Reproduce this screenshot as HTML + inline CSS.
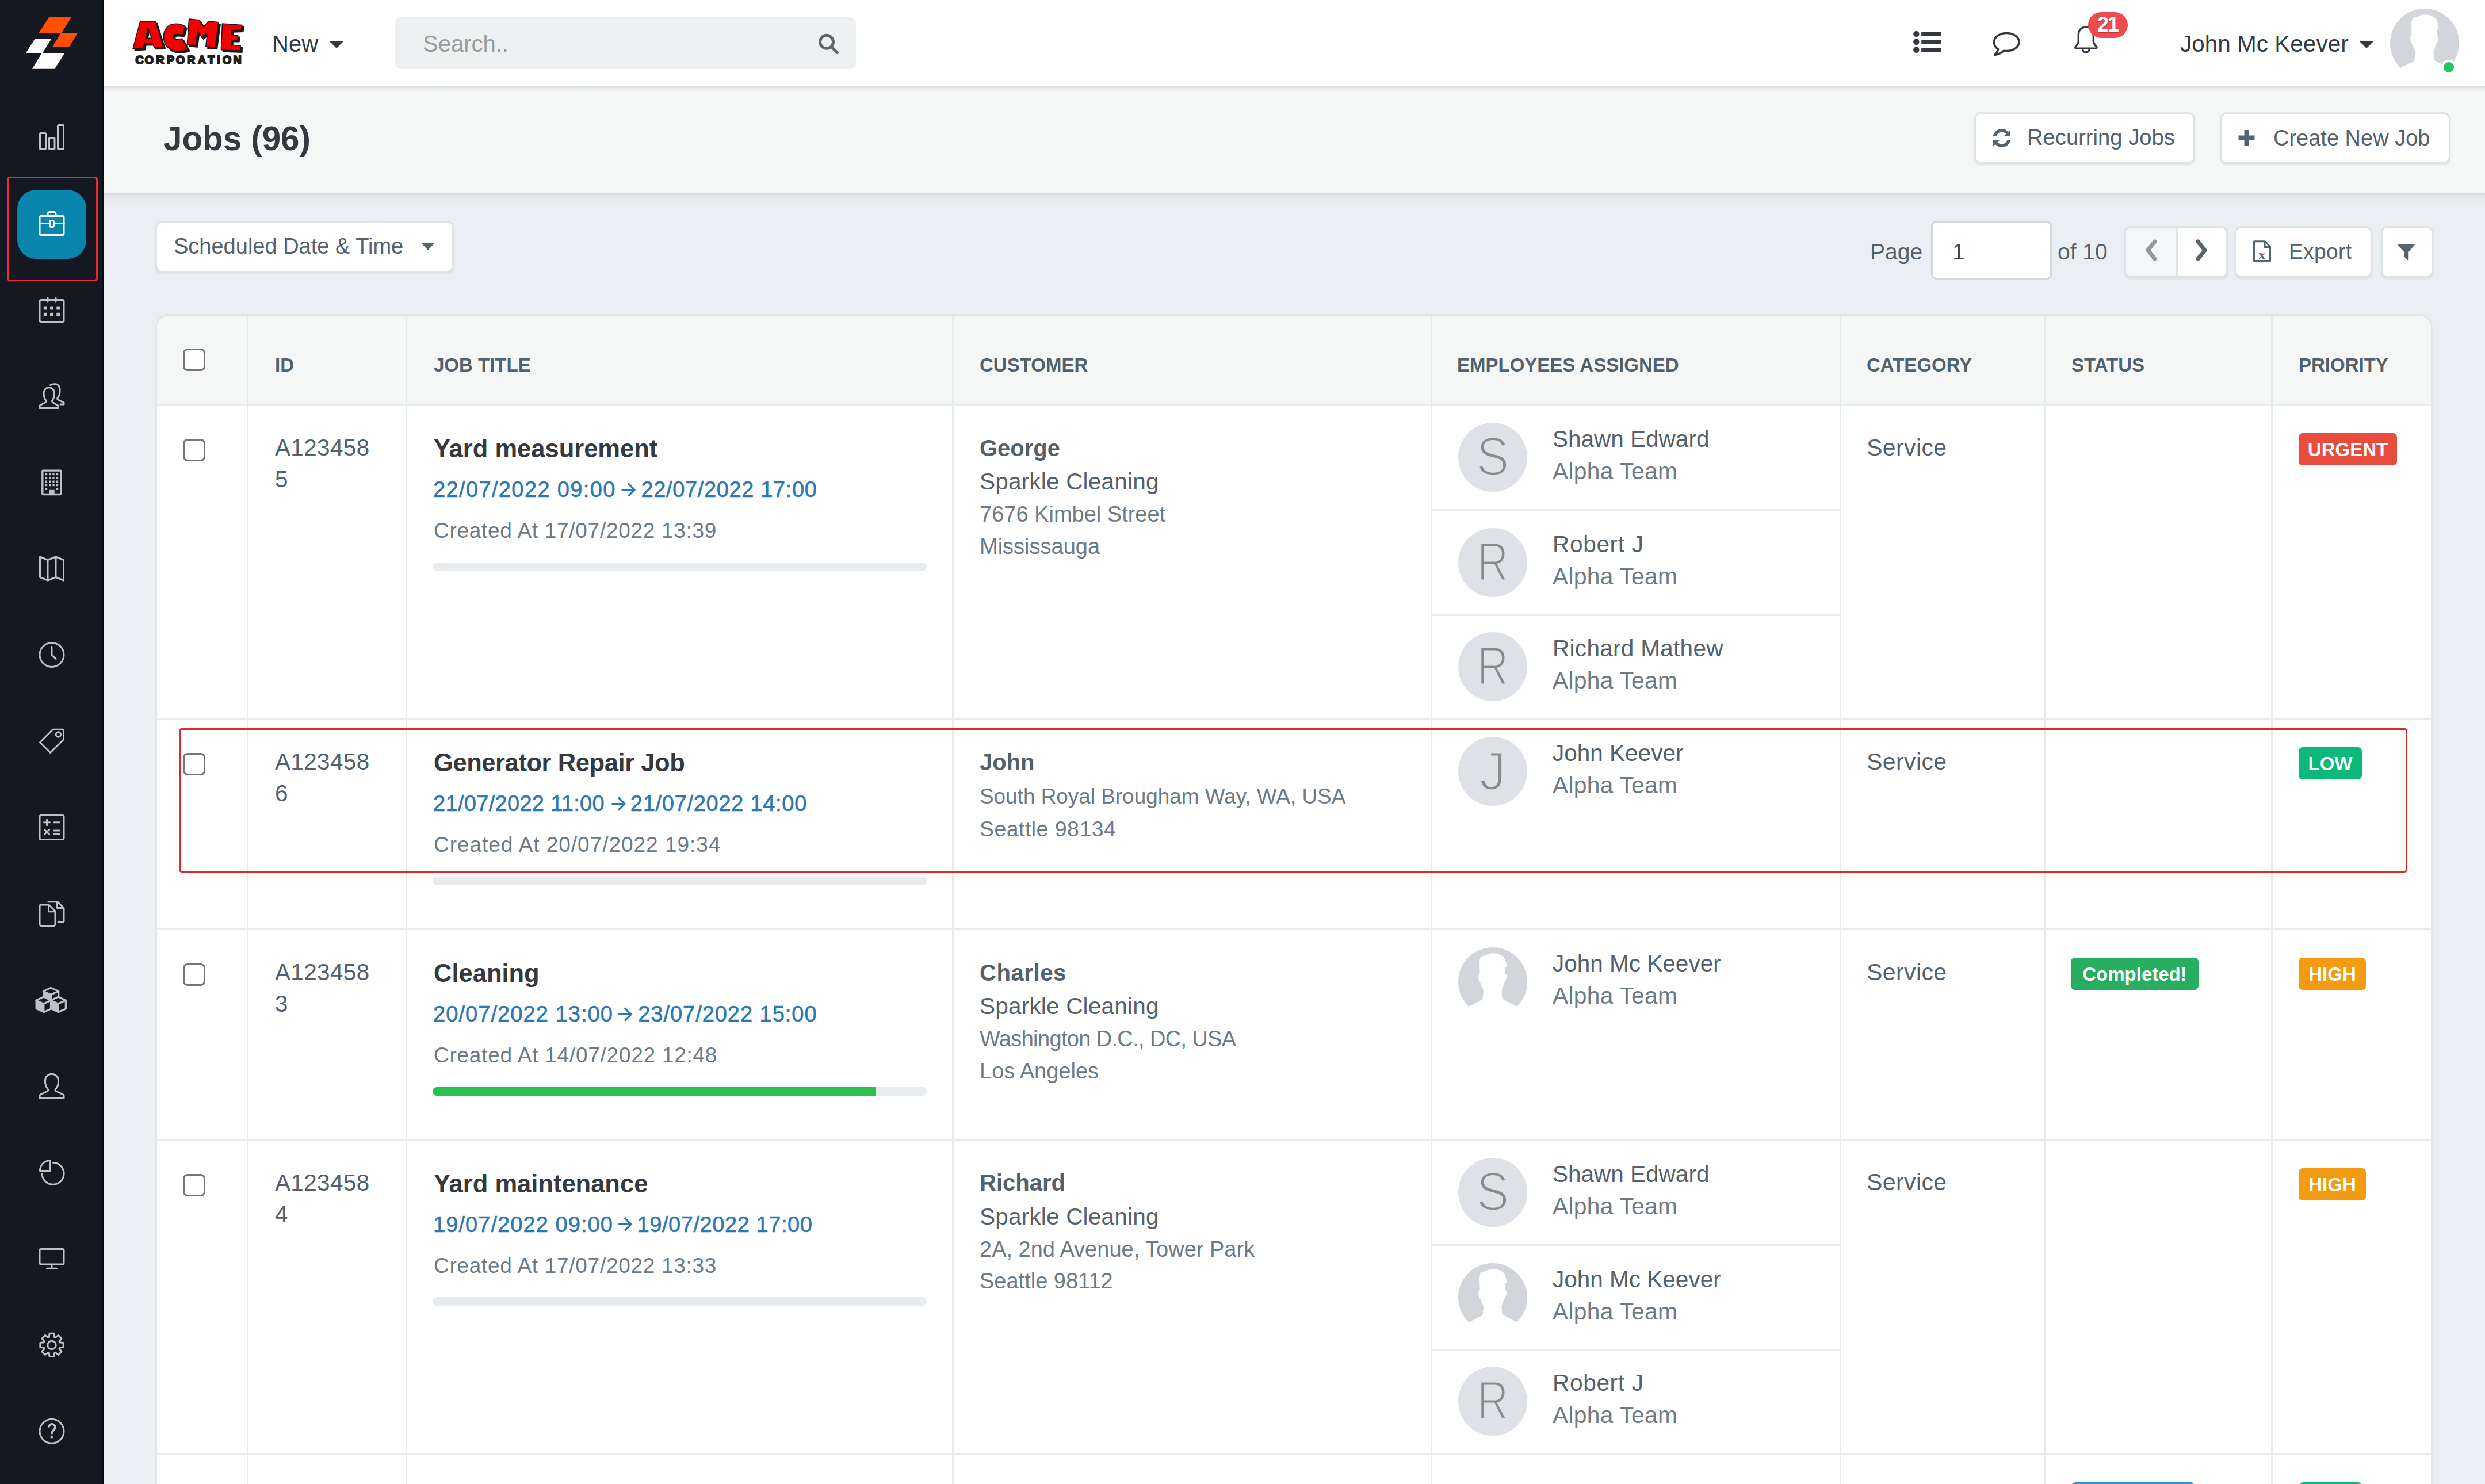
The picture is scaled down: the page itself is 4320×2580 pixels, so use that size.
<!DOCTYPE html>
<html><head><meta charset="utf-8"><title>Jobs</title>
<style>
html,body{margin:0;padding:0;}
body{width:4320px;height:2580px;overflow:hidden;position:relative;background:#ebeef2;font-family:"Liberation Sans",sans-serif;}
.a{position:absolute;display:block;}
.t{position:absolute;white-space:nowrap;line-height:1;}
</style></head><body>

<div class="a" style="left:180px;top:0px;width:4140px;height:150px;background:#ffffff"></div>
<div class="a" style="left:180px;top:150px;width:4140px;height:3px;background:#dcdfdf"></div>
<div class="a" style="left:180px;top:153px;width:4140px;height:183px;background:#f5f7f7"></div>
<div class="a" style="left:180px;top:153px;width:4140px;height:8px;background:linear-gradient(#e9ecec,#f5f7f7)"></div>
<div class="a" style="left:180px;top:336px;width:4140px;height:3px;background:#d8dde0"></div>
<div class="a" style="left:180px;top:339px;width:4140px;height:14px;background:linear-gradient(#e1e5e8,#ebeef2)"></div>
<div class="a" style="left:0px;top:0px;width:180px;height:2580px;background:#141823"></div>
<div class="a" style="left:178px;top:0px;width:2px;height:2580px;background:#060a14"></div>
<svg class="a" style="left:0px;top:0px;" width="180" height="150" viewBox="0 0 180 150"><polygon fill="#fe5000" points="85,30 124,30 107,57.6 67.4,57.6"/><polygon fill="#fe5000" points="106,57.4 135,57.4 119.7,82.1 90.8,82.1"/><polygon fill="#ffffff" points="60.3,67.9 89,67.9 74,92 45,92"/><polygon fill="#ffffff" points="72.8,92 112.6,92 95.1,119.8 55.9,119.8"/></svg>
<div class="a" style="left:30px;top:330px;width:120px;height:120px;background:#0a86ae;border-radius:33px"></div>
<div class="a" style="left:12px;top:307px;width:152px;height:176px;border:3px solid #ee2a2e;border-radius:5px"></div>
<svg class="a" style="left:50px;top:200px;" width="80" height="80" viewBox="0 0 80 80"><rect x="19.5" y="31.5" width="10" height="28" rx="1.5" fill="none" stroke="#bcc0c8" stroke-width="3" stroke-linecap="round" stroke-linejoin="round"/><rect x="35.5" y="39.5" width="9.5" height="20" rx="1.5" fill="none" stroke="#bcc0c8" stroke-width="3" stroke-linecap="round" stroke-linejoin="round"/><rect x="50.5" y="17.5" width="10" height="42" rx="1.5" fill="none" stroke="#bcc0c8" stroke-width="3" stroke-linecap="round" stroke-linejoin="round"/></svg>
<svg class="a" style="left:50px;top:350px;" width="80" height="80" viewBox="0 0 80 80"><rect x="19" y="25.5" width="42" height="33" rx="2.5" fill="none" stroke="#ffffff" stroke-width="3" stroke-linecap="round" stroke-linejoin="round"/><path d="M33 25.5 V22 a3.5 3.5 0 0 1 3.5 -3.5 h7 a3.5 3.5 0 0 1 3.5 3.5 V25.5" fill="none" stroke="#ffffff" stroke-width="3" stroke-linecap="round" stroke-linejoin="round"/><path d="M19 38.5 H36 M44 38.5 H61" fill="none" stroke="#ffffff" stroke-width="3" stroke-linecap="round" stroke-linejoin="round"/><rect x="36.5" y="33.5" width="7" height="11" rx="2.5" fill="none" stroke="#ffffff" stroke-width="3" stroke-linecap="round" stroke-linejoin="round"/></svg>
<svg class="a" style="left:50px;top:500px;" width="80" height="80" viewBox="0 0 80 80"><rect x="19" y="21.5" width="42" height="38" rx="2.5" fill="none" stroke="#bcc0c8" stroke-width="3" stroke-linecap="round" stroke-linejoin="round"/><path d="M33 17.5 V24 M47 17.5 V24" fill="none" stroke="#bcc0c8" stroke-width="3" stroke-linecap="round" stroke-linejoin="round"/><g fill="#bcc0c8"><rect x="25.8" y="32.6" width="6" height="6" rx="1.2"/><rect x="37" y="32.6" width="6" height="6" rx="1.2"/><rect x="48.2" y="32.6" width="6" height="6" rx="1.2"/><rect x="25.8" y="43.8" width="6" height="6" rx="1.2"/><rect x="37" y="43.8" width="6" height="6" rx="1.2"/><rect x="48.2" y="43.8" width="6" height="6" rx="1.2"/></g></svg>
<svg class="a" style="left:50px;top:650px;" width="80" height="80" viewBox="0 0 80 80"><path d="M19 59.5 H51 V55 L41.5 49.5 Q39.5 47.5 41.5 45 Q44.5 41 44.5 34 V33 A9.2 9.2 0 0 0 26.1 33 V34 Q26.1 41 29.1 45 Q31.1 47.5 29.1 49.5 L19 55 Z" fill="none" stroke="#bcc0c8" stroke-width="3" stroke-linecap="round" stroke-linejoin="round"/><path d="M37.5 19.5 Q41 17.5 44.5 17.5 A9 9 0 0 1 54 26.5 V31 Q54 37 50.5 41 Q48.5 43.5 51 45 L61 50 V53 H55" fill="none" stroke="#bcc0c8" stroke-width="3" stroke-linecap="round" stroke-linejoin="round"/></svg>
<svg class="a" style="left:50px;top:800px;" width="80" height="80" viewBox="0 0 80 80"><rect x="23.8" y="18.1" width="32.2" height="41.4" rx="1" fill="none" stroke="#bcc0c8" stroke-width="3.4"/><g fill="#bcc0c8"><rect x="28.8" y="22.8" width="3.4" height="3.4" rx="0.6"/><rect x="35.0" y="22.8" width="3.4" height="3.4" rx="0.6"/><rect x="41.3" y="22.8" width="3.4" height="3.4" rx="0.6"/><rect x="47.8" y="22.8" width="3.4" height="3.4" rx="0.6"/><rect x="28.8" y="29.0" width="3.4" height="3.4" rx="0.6"/><rect x="35.0" y="29.0" width="3.4" height="3.4" rx="0.6"/><rect x="41.3" y="29.0" width="3.4" height="3.4" rx="0.6"/><rect x="47.8" y="29.0" width="3.4" height="3.4" rx="0.6"/><rect x="28.8" y="35.5" width="3.4" height="3.4" rx="0.6"/><rect x="35.0" y="35.5" width="3.4" height="3.4" rx="0.6"/><rect x="41.3" y="35.5" width="3.4" height="3.4" rx="0.6"/><rect x="47.8" y="35.5" width="3.4" height="3.4" rx="0.6"/><rect x="28.8" y="41.9" width="3.4" height="3.4" rx="0.6"/><rect x="35.0" y="41.9" width="3.4" height="3.4" rx="0.6"/><rect x="41.3" y="41.9" width="3.4" height="3.4" rx="0.6"/><rect x="47.8" y="41.9" width="3.4" height="3.4" rx="0.6"/><rect x="28.8" y="48.6" width="3.4" height="3.4" rx="0.6"/><rect x="47.8" y="48.6" width="3.4" height="3.4" rx="0.6"/><rect x="35" y="51.8" width="9.7" height="8"/></g></svg>
<svg class="a" style="left:50px;top:950px;" width="80" height="80" viewBox="0 0 80 80"><path d="M19.5 18 L33 23.5 L47 18 L60.5 23.5 V59 L47 53.5 L33 59 L19.5 53.5 Z M33 23.5 V59 M47 18 V53.5" fill="none" stroke="#bcc0c8" stroke-width="3" stroke-linecap="round" stroke-linejoin="round"/></svg>
<svg class="a" style="left:50px;top:1100px;" width="80" height="80" viewBox="0 0 80 80"><circle cx="40" cy="38.4" r="21" fill="none" stroke="#bcc0c8" stroke-width="3" stroke-linecap="round" stroke-linejoin="round"/><path d="M40 24.5 V38.5 L47.2 45.5" fill="none" stroke="#bcc0c8" stroke-width="3" stroke-linecap="round" stroke-linejoin="round"/></svg>
<svg class="a" style="left:50px;top:1250px;" width="80" height="80" viewBox="0 0 80 80"><path d="M19.5 40.8 L42 18.2 H59 A1.5 1.5 0 0 1 60.5 19.7 V35.8 L37.5 58.5 Z" fill="none" stroke="#bcc0c8" stroke-width="3" stroke-linecap="round" stroke-linejoin="round"/><circle cx="51.3" cy="27" r="4.2" fill="none" stroke="#bcc0c8" stroke-width="3" stroke-linecap="round" stroke-linejoin="round"/></svg>
<svg class="a" style="left:50px;top:1400px;" width="80" height="80" viewBox="0 0 80 80"><rect x="19" y="17.5" width="42" height="42" rx="2.5" fill="none" stroke="#bcc0c8" stroke-width="3" stroke-linecap="round" stroke-linejoin="round"/><path d="M26.5 29.8 H36.5 M31.5 24.8 V34.8 M44 29.8 H53.5 M27.5 42.5 L35.5 50.5 M35.5 42.5 L27.5 50.5 M44 44 H53.5 M44 49.5 H53.5" fill="none" stroke="#bcc0c8" stroke-width="3" stroke-linecap="round" stroke-linejoin="round"/></svg>
<svg class="a" style="left:50px;top:1550px;" width="80" height="80" viewBox="0 0 80 80"><path d="M35 23 H21.5 A2.5 2.5 0 0 0 19 25.5 V57 A2.5 2.5 0 0 0 21.5 59.5 H43.5 A2.5 2.5 0 0 0 46 57 V34 L35 23 Z M34.5 23 V34.8 H46" fill="none" stroke="#bcc0c8" stroke-width="3" stroke-linecap="round" stroke-linejoin="round"/><path d="M34 17.7 H50 L61 28.5 V51 A2.5 2.5 0 0 1 58.5 53.5 H51 M49.5 17.7 V28.5 H61" fill="none" stroke="#bcc0c8" stroke-width="3" stroke-linecap="round" stroke-linejoin="round"/></svg>
<svg class="a" style="left:50px;top:1700px;" width="80" height="80" viewBox="0 0 80 80"><g transform="translate(38.5,15.8) scale(0.953,0.92) translate(-38.5,-15.7)"><path d="M24.7 24.0 L38.5 30.5 V46.5 L24.7 40.0 Z" fill="#bcc0c8" stroke="#bcc0c8" stroke-width="2.4" stroke-linejoin="round"/><path d="M38.5 17.5 L52.3 24.0 L38.5 30.5 L24.7 24.0 Z" fill="#141823" stroke="#bcc0c8" stroke-width="3.4" stroke-linejoin="round"/><path d="M38.5 30.5 L52.3 24.0 V40.0 L38.5 46.5 Z" fill="#141823" stroke="#bcc0c8" stroke-width="3.4" stroke-linejoin="round"/><path d="M11.399999999999999 41.0 L25.2 47.5 V63.5 L11.399999999999999 57.0 Z" fill="#bcc0c8" stroke="#bcc0c8" stroke-width="2.4" stroke-linejoin="round"/><path d="M25.2 34.5 L39.0 41.0 L25.2 47.5 L11.399999999999999 41.0 Z" fill="#141823" stroke="#bcc0c8" stroke-width="3.4" stroke-linejoin="round"/><path d="M25.2 47.5 L39.0 41.0 V57.0 L25.2 63.5 Z" fill="#141823" stroke="#bcc0c8" stroke-width="3.4" stroke-linejoin="round"/><path d="M38.0 41.0 L51.8 47.5 V63.5 L38.0 57.0 Z" fill="#bcc0c8" stroke="#bcc0c8" stroke-width="2.4" stroke-linejoin="round"/><path d="M51.8 34.5 L65.6 41.0 L51.8 47.5 L38.0 41.0 Z" fill="#141823" stroke="#bcc0c8" stroke-width="3.4" stroke-linejoin="round"/><path d="M51.8 47.5 L65.6 41.0 V57.0 L51.8 63.5 Z" fill="#141823" stroke="#bcc0c8" stroke-width="3.4" stroke-linejoin="round"/></g></svg>
<svg class="a" style="left:50px;top:1850px;" width="80" height="80" viewBox="0 0 80 80"><path d="M19 59.5 H61 V55 Q61 53.5 59.5 52.8 L47.5 47 Q45 45.5 46.8 43.5 Q51.5 38 51.5 30 V28.8 A11.5 11.5 0 0 0 28.5 28.8 V30 Q28.5 38 33.2 43.5 Q35 45.5 32.5 47 L20.5 52.8 Q19 53.5 19 55 Z" fill="none" stroke="#bcc0c8" stroke-width="3" stroke-linecap="round" stroke-linejoin="round"/></svg>
<svg class="a" style="left:50px;top:2000px;" width="80" height="80" viewBox="0 0 80 80"><path d="M37.3 17.5 V35.5 H19.5 A17.8 18 0 0 1 37.3 17.5 Z" fill="none" stroke="#bcc0c8" stroke-width="3" stroke-linecap="round" stroke-linejoin="round"/><path d="M42.5 21.3 A19 19 0 1 1 23.1 40.6" fill="none" stroke="#bcc0c8" stroke-width="3" stroke-linecap="round" stroke-linejoin="round"/></svg>
<svg class="a" style="left:50px;top:2150px;" width="80" height="80" viewBox="0 0 80 80"><rect x="19" y="21.5" width="42" height="26.5" rx="2.5" fill="none" stroke="#bcc0c8" stroke-width="3" stroke-linecap="round" stroke-linejoin="round"/><path d="M40 48 V55.3 M31.5 55.3 H48.5" fill="none" stroke="#bcc0c8" stroke-width="3" stroke-linecap="round" stroke-linejoin="round"/></svg>
<svg class="a" style="left:50px;top:2300px;" width="80" height="80" viewBox="0 0 80 80"><path d="M35.28 24.69 L36.09 18.28 L43.91 18.28 L44.72 24.69 L46.36 25.37 L51.46 21.40 L57.00 26.94 L53.03 32.04 L53.71 33.68 L60.12 34.49 L60.12 42.31 L53.71 43.12 L53.03 44.76 L57.00 49.86 L51.46 55.40 L46.36 51.43 L44.72 52.11 L43.91 58.52 L36.09 58.52 L35.28 52.11 L33.64 51.43 L28.54 55.40 L23.00 49.86 L26.97 44.76 L26.29 43.12 L19.88 42.31 L19.88 34.49 L26.29 33.68 L26.97 32.04 L23.00 26.94 L28.54 21.40 L33.64 25.37 Z" fill="none" stroke="#bcc0c8" stroke-width="3" stroke-linecap="round" stroke-linejoin="round"/><circle cx="40" cy="38.4" r="7.2" fill="none" stroke="#bcc0c8" stroke-width="3" stroke-linecap="round" stroke-linejoin="round"/></svg>
<svg class="a" style="left:50px;top:2450px;" width="80" height="80" viewBox="0 0 80 80"><circle cx="40" cy="38.3" r="21" fill="none" stroke="#bcc0c8" stroke-width="3" stroke-linecap="round" stroke-linejoin="round"/><path d="M34.8 31.5 A5.5 5.5 0 1 1 44.5 35 L41 39 Q39.8 40.4 39.8 42.5 V43.5" fill="none" stroke="#bcc0c8" stroke-width="3.6"/><rect x="37.8" y="46.5" width="4" height="3.8" fill="#bcc0c8"/></svg>
<svg class="a" style="left:0px;top:0px;" width="440" height="130" viewBox="0 0 440 130"><path fill-rule="evenodd" d="M234.3,87.6 246.8,41.1 273.2,40.4 287.6,85.2 270.9,85.4 269.2,78.8 253.9,78.8 252.2,86.6 Z M256.0,69.6 260.7,51.5 266.6,69.6 Z" fill="#1f1b1c" stroke="#1f1b1c" stroke-width="1.6" stroke-linejoin="round"/><path d="M321.9 45.5 C316 42.3 311 41.2 306 41.2 C292 41.2 284.4 51 284.4 64 C284.4 78 294 88.8 309 88.8 C316 88.8 322 87.5 326.4 85.5 L316.5 67.2 C313 68 309 68.1 306 68.1 C303 68.1 301.4 66 301.4 63.8 C301.4 61.5 303 59.6 305.5 59.6 C309 59.6 314 60 317.5 61 Z" transform="translate(3.2,3.2)" fill="#1f1b1c" stroke="#1f1b1c" stroke-width="1.6" stroke-linejoin="round"/><polygon points="331.9,36.2 349.6,37.9 356.7,49.9 365.7,40.0 383.1,42.1 377.4,85.5 360.9,84.3 363.8,59.3 353.9,68.3 346.8,56.5 343.5,82.0 328.6,80.8" fill="#1f1b1c" stroke="#1f1b1c" stroke-width="1.6" stroke-linejoin="round"/><polygon points="389.7,44.2 424.1,46.8 422.7,55.3 406.0,56.0 405.7,64.0 416.8,64.3 415.9,72.8 405.0,72.8 404.8,81.3 421.3,82.7 420.8,91.2 387.6,90.0" fill="#1f1b1c" stroke="#1f1b1c" stroke-width="1.6" stroke-linejoin="round"/><path fill-rule="evenodd" d="M231.1,84.4 243.6,37.9 270.0,37.2 284.4,82.0 267.7,82.2 266.0,75.6 250.7,75.6 249.0,83.4 Z M252.8,66.4 257.5,48.3 263.4,66.4 Z" fill="#f50000" stroke="#1f1b1c" stroke-width="1.6" stroke-linejoin="round"/><path d="M321.9 45.5 C316 42.3 311 41.2 306 41.2 C292 41.2 284.4 51 284.4 64 C284.4 78 294 88.8 309 88.8 C316 88.8 322 87.5 326.4 85.5 L316.5 67.2 C313 68 309 68.1 306 68.1 C303 68.1 301.4 66 301.4 63.8 C301.4 61.5 303 59.6 305.5 59.6 C309 59.6 314 60 317.5 61 Z" transform="translate(0,0)" fill="#f50000" stroke="#1f1b1c" stroke-width="1.6" stroke-linejoin="round"/><polygon points="328.7,33.0 346.4,34.7 353.5,46.7 362.5,36.8 379.9,38.9 374.2,82.3 357.7,81.1 360.6,56.1 350.7,65.1 343.6,53.3 340.3,78.8 325.4,77.6" fill="#f50000" stroke="#1f1b1c" stroke-width="1.6" stroke-linejoin="round"/><polygon points="386.5,41.0 420.9,43.6 419.5,52.1 402.8,52.8 402.5,60.8 413.6,61.1 412.7,69.6 401.8,69.6 401.6,78.1 418.1,79.5 417.6,88.0 384.4,86.8" fill="#f50000" stroke="#1f1b1c" stroke-width="1.6" stroke-linejoin="round"/><text x="242.5" y="111" text-anchor="middle" font-family="Liberation Sans" font-weight="700" font-size="19.5" fill="#231f20" stroke="#231f20" stroke-width="2.2" stroke-linejoin="round">C</text><text x="259.4" y="111" text-anchor="middle" font-family="Liberation Sans" font-weight="700" font-size="19.5" fill="#231f20" stroke="#231f20" stroke-width="2.2" stroke-linejoin="round">O</text><text x="278.3" y="111" text-anchor="middle" font-family="Liberation Sans" font-weight="700" font-size="19.5" fill="#231f20" stroke="#231f20" stroke-width="2.2" stroke-linejoin="round">R</text><text x="296.4" y="111" text-anchor="middle" font-family="Liberation Sans" font-weight="700" font-size="19.5" fill="#231f20" stroke="#231f20" stroke-width="2.2" stroke-linejoin="round">P</text><text x="313.7" y="111" text-anchor="middle" font-family="Liberation Sans" font-weight="700" font-size="19.5" fill="#231f20" stroke="#231f20" stroke-width="2.2" stroke-linejoin="round">O</text><text x="332.2" y="111" text-anchor="middle" font-family="Liberation Sans" font-weight="700" font-size="19.5" fill="#231f20" stroke="#231f20" stroke-width="2.2" stroke-linejoin="round">R</text><text x="351.1" y="111" text-anchor="middle" font-family="Liberation Sans" font-weight="700" font-size="19.5" fill="#231f20" stroke="#231f20" stroke-width="2.2" stroke-linejoin="round">A</text><text x="367.2" y="111" text-anchor="middle" font-family="Liberation Sans" font-weight="700" font-size="19.5" fill="#231f20" stroke="#231f20" stroke-width="2.2" stroke-linejoin="round">T</text><text x="380" y="111" text-anchor="middle" font-family="Liberation Sans" font-weight="700" font-size="19.5" fill="#231f20" stroke="#231f20" stroke-width="2.2" stroke-linejoin="round">I</text><text x="394.5" y="111" text-anchor="middle" font-family="Liberation Sans" font-weight="700" font-size="19.5" fill="#231f20" stroke="#231f20" stroke-width="2.2" stroke-linejoin="round">O</text><text x="412.6" y="111" text-anchor="middle" font-family="Liberation Sans" font-weight="700" font-size="19.5" fill="#231f20" stroke="#231f20" stroke-width="2.2" stroke-linejoin="round">N</text></svg>
<div class="t" style="left:473.0px;top:55.9px;font-size:40px;color:#343a40;font-weight:400;">New</div>
<svg class="a" style="left:573px;top:72px;" width="24" height="12" viewBox="0 0 24 12"><polygon points="0,0 24,0 12,12" fill="#343a40"/></svg>
<div class="a" style="left:687px;top:30px;width:801px;height:90px;background:#edf0f1;border-radius:9px"></div>
<div class="t" style="left:735.0px;top:56.1px;font-size:40px;color:#9b9b9b;font-weight:400;">Search..</div>
<svg class="a" style="left:1415px;top:52px;" width="48" height="48" viewBox="0 0 48 48"><circle cx="22" cy="20.8" r="11.5" fill="none" stroke="#5b6872" stroke-width="5"/><path d="M30.5 29.5 L40.5 39.5" stroke="#5b6872" stroke-width="5" stroke-linecap="round"/></svg>
<svg class="a" style="left:3320px;top:50px;" width="60" height="45" viewBox="0 0 60 45"><g fill="#343a40"><circle cx="11.3" cy="8.9" r="5.2"/><circle cx="11.3" cy="22.7" r="5.2"/><circle cx="11.3" cy="36.8" r="5.2"/><rect x="20.2" y="5.5" width="33.8" height="6.8" rx="0.8"/><rect x="20.2" y="19.3" width="33.8" height="6.8" rx="0.8"/><rect x="20.2" y="33.4" width="33.8" height="6.8" rx="0.8"/></g></svg>
<svg class="a" style="left:3455px;top:45px;" width="65" height="60" viewBox="0 0 65 60"><path d="M33.2 12.5 C45.5 12.5 55 19.5 55 28 C55 36.5 45.5 43.5 33.2 43.5 C31.5 43.5 30 43.4 28.6 43.2 C25 46.5 19.5 49.5 13 50.5 C15.8 47.5 17.8 44 18.6 40.5 C13.5 37.5 11.5 33 11.5 28 C11.5 19.5 21 12.5 33.2 12.5 Z" fill="none" stroke="#343a40" stroke-width="3.6" stroke-linejoin="round"/></svg>
<svg class="a" style="left:3600px;top:40px;" width="55" height="58" viewBox="0 0 55 58"><path d="M26.3 7 C17.8 7 13.3 13 13.3 21 V31.5 C13.3 35 11 38 8 41.5 C7 42.8 7.6 44.2 9.3 44.2 H43.3 C45 44.2 45.6 42.8 44.6 41.5 C41.6 38 39.3 35 39.3 31.5 V21 C39.3 13 34.8 7 26.3 7 Z" fill="none" stroke="#343a40" stroke-width="3.4" stroke-linejoin="round"/><path d="M20.3 45 A6 6 0 0 0 32.3 45" fill="none" stroke="#343a40" stroke-width="3.4"/></svg>
<div class="a" style="left:3630px;top:21px;width:69px;height:45px;background:#ef4b4f;border-radius:23px"></div>
<div class="t" style="left:3646.0px;top:25.0px;font-size:36px;color:#ffffff;font-weight:700;text-shadow:0 2px 0 rgba(120,0,0,0.35);letter-spacing:-2px">21</div>
<div class="t" style="left:3790.0px;top:55.7px;font-size:40.5px;color:#343a40;font-weight:400;">John Mc Keever</div>
<svg class="a" style="left:4102px;top:72px;" width="24" height="12" viewBox="0 0 24 12"><polygon points="0,0 24,0 12,12" fill="#343a40"/></svg>
<svg class="a" style="left:4155px;top:15px;" width="120" height="120" viewBox="0 0 120 120"><circle cx="60" cy="60" r="60" fill="#d2d6da"/><path fill="#ffffff" d="M18.5 102.7 L40.7 91.4 Q43 89 43 85.3 L44.4 74.9 L40.7 68.3 L39.2 62.2 L37.4 60.3 Q35 56 35 51.3 Q35 47.5 37.6 46.2 L37.2 31.5 Q37 22 37.8 20.2 Q39 16 41.6 15.5 L46.3 14.5 Q51 11 60.5 10.3 Q70 10.5 74.6 13.6 Q80 17 81.2 21.1 Q84 27 84.1 32.5 V34.3 L82.2 35.3 L81.7 46.6 L84.1 48.5 Q84.5 51 83.6 54.2 L81.2 60.8 L79.3 62.6 L78.4 67.4 L75.6 74 L76 84.3 Q76.5 89 78.4 90.5 L101.5 102.7 L120 120 H0 Z"/></svg>
<div class="a" style="left:4248px;top:108px;width:18px;height:18px;background:#22c55e;border-radius:50%;box-shadow:0 0 0 4.5px #ffffff"></div>
<div class="t" style="left:284.0px;top:212.3px;font-size:58.3px;color:#343a40;font-weight:700;">Jobs (96)</div>
<div class="a" style="left:3432px;top:195px;width:384px;height:90px;box-sizing:border-box;background:#ffffff;border:3px solid #dde4e6;border-radius:12px;box-shadow:0 2px 3px rgba(30,50,60,0.09)"></div>
<svg class="a" style="left:3460px;top:220px;" width="40" height="40" viewBox="0 0 40 40"><g fill="#56646d"><path d="M4.5 16.5 C6.5 9 13 4 20 4 C24.5 4 28.5 6 31.3 9 L35 5.2 V16.6 H23.6 L27.4 12.8 C25.5 10.8 22.9 9.5 20 9.5 C15.8 9.5 12 12.3 10.4 16.6 Z"/><path d="M35.5 23.4 C33.5 31 27 36 20 36 C15.5 36 11.5 34 8.7 31 L5 34.8 V23.4 H16.4 L12.6 27.2 C14.5 29.2 17.1 30.5 20 30.5 C24.2 30.5 28 27.7 29.6 23.4 Z"/></g></svg>
<div class="t" style="left:3524.0px;top:220.4px;font-size:38.2px;color:#52616b;font-weight:400;">Recurring Jobs</div>
<div class="a" style="left:3859px;top:195px;width:401px;height:90px;box-sizing:border-box;background:#ffffff;border:3px solid #dde4e6;border-radius:12px;box-shadow:0 2px 3px rgba(30,50,60,0.09)"></div>
<svg class="a" style="left:3888px;top:222px;" width="36" height="36" viewBox="0 0 36 36"><path d="M17.5 4 V31 M3.5 17.5 H31.5" stroke="#56646d" stroke-width="8"/></svg>
<div class="t" style="left:3952.0px;top:220.5px;font-size:38px;color:#52616b;font-weight:400;">Create New Job</div>
<div class="a" style="left:270px;top:384px;width:519px;height:90px;box-sizing:border-box;background:#ffffff;border:3px solid #dde4e6;border-radius:12px;box-shadow:0 2px 3px rgba(30,50,60,0.09)"></div>
<div class="t" style="left:302.0px;top:409.1px;font-size:38px;color:#52616b;font-weight:400;">Scheduled Date &amp; Time</div>
<svg class="a" style="left:732px;top:422px;" width="24" height="13" viewBox="0 0 24 13"><polygon points="0,0 24,0 12,13" fill="#56646d"/></svg>
<div class="t" style="left:3251.0px;top:417.5px;font-size:39px;color:#52616b;font-weight:400;">Page</div>
<div class="a" style="left:3357px;top:384px;width:210px;height:102px;box-sizing:border-box;background:#ffffff;border:3px solid #cfd9da;border-radius:9px"></div>
<div class="t" style="left:3394.0px;top:417.5px;font-size:39px;color:#454545;font-weight:400;">1</div>
<div class="t" style="left:3577.0px;top:417.5px;font-size:39px;color:#52616b;font-weight:400;">of 10</div>
<div class="a" style="left:3693px;top:393px;width:180px;height:90px;box-sizing:border-box;background:#ffffff;border:3px solid #dde4e6;border-radius:12px;box-shadow:0 2px 3px rgba(30,50,60,0.09);overflow:hidden"></div>
<div class="a" style="left:3696px;top:396px;width:88px;height:84px;background:#f4f6f8;border-radius:9px 0 0 9px"></div>
<div class="a" style="left:3783px;top:396px;width:3px;height:84px;background:#dde4e6"></div>
<svg class="a" style="left:3724px;top:414px;" width="32" height="42" viewBox="0 0 32 42"><path d="M22 6 L10 21 L22 36" fill="none" stroke="#8f999f" stroke-width="7" stroke-linecap="round" stroke-linejoin="round"/></svg>
<svg class="a" style="left:3811px;top:414px;" width="32" height="42" viewBox="0 0 32 42"><path d="M10 6 L22 21 L10 36" fill="none" stroke="#56636b" stroke-width="7" stroke-linecap="round" stroke-linejoin="round"/></svg>
<div class="a" style="left:3885px;top:393px;width:239px;height:90px;box-sizing:border-box;background:#ffffff;border:3px solid #dde4e6;border-radius:12px;box-shadow:0 2px 3px rgba(30,50,60,0.09)"></div>
<svg class="a" style="left:3915px;top:417px;" width="36" height="40" viewBox="0 0 36 40"><path d="M3.5 2.8 H22.5 L31.5 12 V36.5 H3.5 Z M22 3 V12.5 H31.5" fill="none" stroke="#56646d" stroke-width="3" stroke-linejoin="round"/><text x="17" y="33.5" text-anchor="middle" font-family="Liberation Serif" font-weight="700" font-size="26" fill="#56646d">x</text></svg>
<div class="t" style="left:3979.0px;top:418.5px;font-size:37px;color:#52616b;font-weight:400;letter-spacing:0.4px">Export</div>
<div class="a" style="left:4139px;top:393px;width:91px;height:90px;box-sizing:border-box;background:#ffffff;border:3px solid #dde4e6;border-radius:12px;box-shadow:0 2px 3px rgba(30,50,60,0.09)"></div>
<svg class="a" style="left:4166px;top:422px;" width="34" height="32" viewBox="0 0 34 32"><path d="M3.5 3.3 H30.5 L20 15.5 V29 L14.5 23.5 V15.5 Z" fill="#56646d" stroke="#56646d" stroke-width="2.5" stroke-linejoin="round"/></svg>
<div class="a" style="left:270px;top:546px;width:3959px;height:2074px;box-sizing:border-box;background:#ffffff;border:3px solid #e3e6e6;border-radius:24px 24px 0 0"></div>
<div class="a" style="left:273px;top:549px;width:3953px;height:153px;background:#f5f7f7;border-radius:21px 21px 0 0"></div>
<div class="a" style="left:273px;top:702px;width:3953px;height:3px;background:#e6ebeb"></div>
<div class="a" style="left:429px;top:549px;width:3px;height:2034px;background:#e6ebeb"></div>
<div class="a" style="left:704.5px;top:549px;width:3px;height:2034px;background:#e6ebeb"></div>
<div class="a" style="left:1655px;top:549px;width:3px;height:2034px;background:#e6ebeb"></div>
<div class="a" style="left:2486.5px;top:549px;width:3px;height:2034px;background:#e6ebeb"></div>
<div class="a" style="left:3197.5px;top:549px;width:3px;height:2034px;background:#e6ebeb"></div>
<div class="a" style="left:3552.5px;top:549px;width:3px;height:2034px;background:#e6ebeb"></div>
<div class="a" style="left:3948px;top:549px;width:3px;height:2034px;background:#e6ebeb"></div>
<div class="a" style="left:318px;top:606px;width:39px;height:39px;box-sizing:border-box;background:#ffffff;border:3px solid #767676;border-radius:8px"></div>
<div class="t" style="left:478.0px;top:618.1px;font-size:33px;color:#52616b;font-weight:700;">ID</div>
<div class="t" style="left:754.0px;top:618.1px;font-size:33px;color:#52616b;font-weight:700;">JOB TITLE</div>
<div class="t" style="left:1703.0px;top:618.1px;font-size:33px;color:#52616b;font-weight:700;">CUSTOMER</div>
<div class="t" style="left:2533.0px;top:618.1px;font-size:33px;color:#52616b;font-weight:700;">EMPLOYEES ASSIGNED</div>
<div class="t" style="left:3245.0px;top:618.1px;font-size:33px;color:#52616b;font-weight:700;">CATEGORY</div>
<div class="t" style="left:3601.0px;top:618.1px;font-size:33px;color:#52616b;font-weight:700;">STATUS</div>
<div class="t" style="left:3996.0px;top:618.1px;font-size:33px;color:#52616b;font-weight:700;">PRIORITY</div>
<div class="a" style="left:273px;top:1248px;width:3953px;height:3px;background:#e6ebeb"></div>
<div class="a" style="left:273px;top:1614px;width:3953px;height:3px;background:#e6ebeb"></div>
<div class="a" style="left:273px;top:1979.5px;width:3953px;height:3px;background:#e6ebeb"></div>
<div class="a" style="left:273px;top:2525.5px;width:3953px;height:3px;background:#e6ebeb"></div>
<div class="a" style="left:318px;top:763px;width:39px;height:39px;box-sizing:border-box;background:#ffffff;border:3px solid #767676;border-radius:8px"></div>
<div class="t" style="left:478.0px;top:758.3px;font-size:40.4px;color:#52616b;font-weight:400;letter-spacing:0.4px;">A123458</div>
<div class="t" style="left:478.0px;top:813.3px;font-size:40.4px;color:#52616b;font-weight:400;">5</div>
<div class="t" style="left:754.0px;top:759.2px;font-size:43.5px;color:#343a40;font-weight:700;">Yard measurement</div>
<div class="t" style="left:753.0px;top:832.3px;font-size:38px;color:#2b78b5;font-weight:400;letter-spacing:1.37px;-webkit-text-stroke:0.6px #2b78b5">22/07/2022 09:00</div>
<svg class="a" style="left:1078.7px;top:838.5px;" width="27" height="26" viewBox="0 0 27 26"><path d="M1.5 12.5 H24 M13 1.5 L24 12.5 L13 23.5" fill="none" stroke="#2b78b5" stroke-width="3.2"/></svg>
<div class="t" style="left:1114.4px;top:832.3px;font-size:38px;color:#2b78b5;font-weight:400;letter-spacing:0.64px;-webkit-text-stroke:0.6px #2b78b5">22/07/2022 17:00</div>
<div class="t" style="left:754.0px;top:904.2px;font-size:37px;color:#6c7a84;font-weight:400;letter-spacing:0.7px;">Created At 17/07/2022 13:39</div>
<div class="a" style="left:752px;top:977.5px;width:859px;height:15px;background:#e9ecef;border-radius:8px;overflow:hidden"></div>
<div class="t" style="left:1703.0px;top:758.6px;font-size:40px;color:#52616b;font-weight:700;">George</div>
<div class="t" style="left:1703.0px;top:817.2px;font-size:40.5px;color:#52616b;font-weight:400;letter-spacing:0.2px;">Sparkle Cleaning</div>
<div class="t" style="left:1703.0px;top:875.3px;font-size:38px;color:#6c7a84;font-weight:400;">7676 Kimbel Street</div>
<div class="t" style="left:1703.0px;top:930.8px;font-size:38px;color:#6c7a84;font-weight:400;">Mississauga</div>
<svg class="a" style="left:2535px;top:735px;" width="120" height="120" viewBox="0 0 120 120"><circle cx="60" cy="60" r="60" fill="#dee2e6"/><g transform="translate(60,0) scale(0.9,1)"><text x="0" y="91.5" text-anchor="middle" font-family="Liberation Sans" font-size="94.5" fill="#8a8a8a" stroke="#dee2e6" stroke-width="3.2">S</text></g></svg>
<div class="t" style="left:2699.0px;top:743.2px;font-size:40.5px;color:#52616b;font-weight:400;">Shawn Edward</div>
<div class="t" style="left:2699.0px;top:799.2px;font-size:40.7px;color:#6c7a84;font-weight:400;letter-spacing:0.3px;">Alpha Team</div>
<div class="a" style="left:2489.5px;top:885px;width:708px;height:3px;background:#e6ebeb"></div>
<svg class="a" style="left:2535px;top:918px;" width="120" height="120" viewBox="0 0 120 120"><circle cx="60" cy="60" r="60" fill="#dee2e6"/><g transform="translate(60,0) scale(0.8,1)"><text x="0" y="91.5" text-anchor="middle" font-family="Liberation Sans" font-size="94.5" fill="#8a8a8a" stroke="#dee2e6" stroke-width="3.2">R</text></g></svg>
<div class="t" style="left:2699.0px;top:926.2px;font-size:40.5px;color:#52616b;font-weight:400;letter-spacing:0.7px;">Robert J</div>
<div class="t" style="left:2699.0px;top:982.2px;font-size:40.7px;color:#6c7a84;font-weight:400;letter-spacing:0.3px;">Alpha Team</div>
<div class="a" style="left:2489.5px;top:1068px;width:708px;height:3px;background:#e6ebeb"></div>
<svg class="a" style="left:2535px;top:1098.5px;" width="120" height="120" viewBox="0 0 120 120"><circle cx="60" cy="60" r="60" fill="#dee2e6"/><g transform="translate(60,0) scale(0.8,1)"><text x="0" y="91.5" text-anchor="middle" font-family="Liberation Sans" font-size="94.5" fill="#8a8a8a" stroke="#dee2e6" stroke-width="3.2">R</text></g></svg>
<div class="t" style="left:2699.0px;top:1106.7px;font-size:40.5px;color:#52616b;font-weight:400;letter-spacing:0.3px;">Richard Mathew</div>
<div class="t" style="left:2699.0px;top:1162.7px;font-size:40.7px;color:#6c7a84;font-weight:400;letter-spacing:0.3px;">Alpha Team</div>
<div class="t" style="left:3245.0px;top:757.8px;font-size:41px;color:#52616b;font-weight:400;letter-spacing:0.4px;">Service</div>
<div class="a" style="left:3996px;top:753px;width:171px;height:56px;background:#e74c3c;border-radius:7px"></div>
<div class="t" style="left:3996px;top:753px;width:171px;height:56px;line-height:57px;text-align:center;font-size:33px;color:#fff;font-weight:700">URGENT</div>
<div class="a" style="left:318px;top:1309px;width:39px;height:39px;box-sizing:border-box;background:#ffffff;border:3px solid #767676;border-radius:8px"></div>
<div class="t" style="left:478.0px;top:1304.3px;font-size:40.4px;color:#52616b;font-weight:400;letter-spacing:0.4px;">A123458</div>
<div class="t" style="left:478.0px;top:1359.3px;font-size:40.4px;color:#52616b;font-weight:400;">6</div>
<div class="t" style="left:754.0px;top:1305.2px;font-size:43.5px;color:#343a40;font-weight:700;letter-spacing:-0.42px;">Generator Repair Job</div>
<div class="t" style="left:753.0px;top:1378.3px;font-size:38px;color:#2b78b5;font-weight:400;letter-spacing:0.31px;-webkit-text-stroke:0.6px #2b78b5">21/07/2022 11:00</div>
<svg class="a" style="left:1061.6px;top:1384.5px;" width="27" height="26" viewBox="0 0 27 26"><path d="M1.5 12.5 H24 M13 1.5 L24 12.5 L13 23.5" fill="none" stroke="#2b78b5" stroke-width="3.2"/></svg>
<div class="t" style="left:1095.8px;top:1378.3px;font-size:38px;color:#2b78b5;font-weight:400;letter-spacing:0.71px;-webkit-text-stroke:0.6px #2b78b5">21/07/2022 14:00</div>
<div class="t" style="left:754.0px;top:1450.2px;font-size:37px;color:#6c7a84;font-weight:400;letter-spacing:0.97px;">Created At 20/07/2022 19:34</div>
<div class="a" style="left:752px;top:1523.5px;width:859px;height:15px;background:#e9ecef;border-radius:8px;overflow:hidden"></div>
<div class="t" style="left:1703.0px;top:1304.6px;font-size:40px;color:#52616b;font-weight:700;">John</div>
<div class="t" style="left:1703.0px;top:1367.3px;font-size:36.9px;color:#6c7a84;font-weight:400;">South Royal Brougham Way, WA, USA</div>
<div class="t" style="left:1703.0px;top:1423.2px;font-size:37.5px;color:#6c7a84;font-weight:400;letter-spacing:0.45px;">Seattle 98134</div>
<svg class="a" style="left:2535px;top:1281px;" width="120" height="120" viewBox="0 0 120 120"><circle cx="60" cy="60" r="60" fill="#dee2e6"/><g transform="translate(60,0) scale(1.0,1)"><text x="0" y="91.5" text-anchor="middle" font-family="Liberation Sans" font-size="94.5" fill="#8a8a8a" stroke="#dee2e6" stroke-width="3.2">J</text></g></svg>
<div class="t" style="left:2699.0px;top:1289.2px;font-size:40.5px;color:#52616b;font-weight:400;">John Keever</div>
<div class="t" style="left:2699.0px;top:1345.2px;font-size:40.7px;color:#6c7a84;font-weight:400;letter-spacing:0.3px;">Alpha Team</div>
<div class="t" style="left:3245.0px;top:1303.8px;font-size:41px;color:#52616b;font-weight:400;letter-spacing:0.4px;">Service</div>
<div class="a" style="left:3996px;top:1299px;width:110px;height:56px;background:#0cb87a;border-radius:7px"></div>
<div class="t" style="left:3996px;top:1299px;width:110px;height:56px;line-height:57px;text-align:center;font-size:33px;color:#fff;font-weight:700">LOW</div>
<div class="a" style="left:318px;top:1675px;width:39px;height:39px;box-sizing:border-box;background:#ffffff;border:3px solid #767676;border-radius:8px"></div>
<div class="t" style="left:478.0px;top:1670.3px;font-size:40.4px;color:#52616b;font-weight:400;letter-spacing:0.4px;">A123458</div>
<div class="t" style="left:478.0px;top:1725.3px;font-size:40.4px;color:#52616b;font-weight:400;">3</div>
<div class="t" style="left:754.0px;top:1671.2px;font-size:43.5px;color:#343a40;font-weight:700;">Cleaning</div>
<div class="t" style="left:753.0px;top:1744.3px;font-size:38px;color:#2b78b5;font-weight:400;letter-spacing:1.07px;-webkit-text-stroke:0.6px #2b78b5">20/07/2022 13:00</div>
<svg class="a" style="left:1073.2px;top:1750.5px;" width="27" height="26" viewBox="0 0 27 26"><path d="M1.5 12.5 H24 M13 1.5 L24 12.5 L13 23.5" fill="none" stroke="#2b78b5" stroke-width="3.2"/></svg>
<div class="t" style="left:1109.2px;top:1744.3px;font-size:38px;color:#2b78b5;font-weight:400;letter-spacing:0.97px;-webkit-text-stroke:0.6px #2b78b5">23/07/2022 15:00</div>
<div class="t" style="left:754.0px;top:1816.2px;font-size:37px;color:#6c7a84;font-weight:400;letter-spacing:0.74px;">Created At 14/07/2022 12:48</div>
<div class="a" style="left:752px;top:1889.5px;width:859px;height:15px;background:#e9ecef;border-radius:8px;overflow:hidden"></div>
<div class="a" style="left:752px;top:1889.5px;width:771px;height:15px;background:#2bbf4f;border-radius:8px 0 0 8px"></div>
<div class="t" style="left:1703.0px;top:1670.6px;font-size:40px;color:#52616b;font-weight:700;letter-spacing:0.6px;">Charles</div>
<div class="t" style="left:1703.0px;top:1729.2px;font-size:40.5px;color:#52616b;font-weight:400;letter-spacing:0.2px;">Sparkle Cleaning</div>
<div class="t" style="left:1703.0px;top:1787.3px;font-size:38px;color:#6c7a84;font-weight:400;letter-spacing:-0.65px;">Washington D.C., DC, USA</div>
<div class="t" style="left:1703.0px;top:1842.8px;font-size:38px;color:#6c7a84;font-weight:400;">Los Angeles</div>
<svg class="a" style="left:2535px;top:1647px;" width="120" height="120" viewBox="0 0 120 120"><circle cx="60" cy="60" r="60" fill="#d2d6da"/><path fill="#ffffff" d="M18.5 102.7 L40.7 91.4 Q43 89 43 85.3 L44.4 74.9 L40.7 68.3 L39.2 62.2 L37.4 60.3 Q35 56 35 51.3 Q35 47.5 37.6 46.2 L37.2 31.5 Q37 22 37.8 20.2 Q39 16 41.6 15.5 L46.3 14.5 Q51 11 60.5 10.3 Q70 10.5 74.6 13.6 Q80 17 81.2 21.1 Q84 27 84.1 32.5 V34.3 L82.2 35.3 L81.7 46.6 L84.1 48.5 Q84.5 51 83.6 54.2 L81.2 60.8 L79.3 62.6 L78.4 67.4 L75.6 74 L76 84.3 Q76.5 89 78.4 90.5 L101.5 102.7 L120 120 H0 Z"/></svg>
<div class="t" style="left:2699.0px;top:1655.2px;font-size:40.5px;color:#52616b;font-weight:400;">John Mc Keever</div>
<div class="t" style="left:2699.0px;top:1711.2px;font-size:40.7px;color:#6c7a84;font-weight:400;letter-spacing:0.3px;">Alpha Team</div>
<div class="t" style="left:3245.0px;top:1669.8px;font-size:41px;color:#52616b;font-weight:400;letter-spacing:0.4px;">Service</div>
<div class="a" style="left:3600px;top:1665px;width:222px;height:56px;background:#27ae60;border-radius:7px"></div>
<div class="t" style="left:3600px;top:1665px;width:222px;height:56px;line-height:57px;text-align:center;font-size:33px;color:#fff;font-weight:700">Completed!</div>
<div class="a" style="left:3996px;top:1665px;width:117px;height:56px;background:#f39c12;border-radius:7px"></div>
<div class="t" style="left:3996px;top:1665px;width:117px;height:56px;line-height:57px;text-align:center;font-size:33px;color:#fff;font-weight:700">HIGH</div>
<div class="a" style="left:318px;top:2040.5px;width:39px;height:39px;box-sizing:border-box;background:#ffffff;border:3px solid #767676;border-radius:8px"></div>
<div class="t" style="left:478.0px;top:2035.8px;font-size:40.4px;color:#52616b;font-weight:400;letter-spacing:0.4px;">A123458</div>
<div class="t" style="left:478.0px;top:2090.8px;font-size:40.4px;color:#52616b;font-weight:400;">4</div>
<div class="t" style="left:754.0px;top:2036.7px;font-size:43.5px;color:#343a40;font-weight:700;">Yard maintenance</div>
<div class="t" style="left:753.0px;top:2109.8px;font-size:38px;color:#2b78b5;font-weight:400;letter-spacing:1.07px;-webkit-text-stroke:0.6px #2b78b5">19/07/2022 09:00</div>
<svg class="a" style="left:1073px;top:2116.0px;" width="27" height="26" viewBox="0 0 27 26"><path d="M1.5 12.5 H24 M13 1.5 L24 12.5 L13 23.5" fill="none" stroke="#2b78b5" stroke-width="3.2"/></svg>
<div class="t" style="left:1107.5px;top:2109.8px;font-size:38px;color:#2b78b5;font-weight:400;letter-spacing:0.57px;-webkit-text-stroke:0.6px #2b78b5">19/07/2022 17:00</div>
<div class="t" style="left:754.0px;top:2181.7px;font-size:37px;color:#6c7a84;font-weight:400;letter-spacing:0.7px;">Created At 17/07/2022 13:33</div>
<div class="a" style="left:752px;top:2255.0px;width:859px;height:15px;background:#e9ecef;border-radius:8px;overflow:hidden"></div>
<div class="t" style="left:1703.0px;top:2036.1px;font-size:40px;color:#52616b;font-weight:700;">Richard</div>
<div class="t" style="left:1703.0px;top:2094.7px;font-size:40.5px;color:#52616b;font-weight:400;letter-spacing:0.2px;">Sparkle Cleaning</div>
<div class="t" style="left:1703.0px;top:2152.8px;font-size:38px;color:#6c7a84;font-weight:400;">2A, 2nd Avenue, Tower Park</div>
<div class="t" style="left:1703.0px;top:2208.3px;font-size:38px;color:#6c7a84;font-weight:400;">Seattle 98112</div>
<svg class="a" style="left:2535px;top:2012.5px;" width="120" height="120" viewBox="0 0 120 120"><circle cx="60" cy="60" r="60" fill="#dee2e6"/><g transform="translate(60,0) scale(0.9,1)"><text x="0" y="91.5" text-anchor="middle" font-family="Liberation Sans" font-size="94.5" fill="#8a8a8a" stroke="#dee2e6" stroke-width="3.2">S</text></g></svg>
<div class="t" style="left:2699.0px;top:2020.7px;font-size:40.5px;color:#52616b;font-weight:400;">Shawn Edward</div>
<div class="t" style="left:2699.0px;top:2076.7px;font-size:40.7px;color:#6c7a84;font-weight:400;letter-spacing:0.3px;">Alpha Team</div>
<div class="a" style="left:2489.5px;top:2162.5px;width:708px;height:3px;background:#e6ebeb"></div>
<svg class="a" style="left:2535px;top:2195.5px;" width="120" height="120" viewBox="0 0 120 120"><circle cx="60" cy="60" r="60" fill="#d2d6da"/><path fill="#ffffff" d="M18.5 102.7 L40.7 91.4 Q43 89 43 85.3 L44.4 74.9 L40.7 68.3 L39.2 62.2 L37.4 60.3 Q35 56 35 51.3 Q35 47.5 37.6 46.2 L37.2 31.5 Q37 22 37.8 20.2 Q39 16 41.6 15.5 L46.3 14.5 Q51 11 60.5 10.3 Q70 10.5 74.6 13.6 Q80 17 81.2 21.1 Q84 27 84.1 32.5 V34.3 L82.2 35.3 L81.7 46.6 L84.1 48.5 Q84.5 51 83.6 54.2 L81.2 60.8 L79.3 62.6 L78.4 67.4 L75.6 74 L76 84.3 Q76.5 89 78.4 90.5 L101.5 102.7 L120 120 H0 Z"/></svg>
<div class="t" style="left:2699.0px;top:2203.7px;font-size:40.5px;color:#52616b;font-weight:400;">John Mc Keever</div>
<div class="t" style="left:2699.0px;top:2259.7px;font-size:40.7px;color:#6c7a84;font-weight:400;letter-spacing:0.3px;">Alpha Team</div>
<div class="a" style="left:2489.5px;top:2345.5px;width:708px;height:3px;background:#e6ebeb"></div>
<svg class="a" style="left:2535px;top:2376.0px;" width="120" height="120" viewBox="0 0 120 120"><circle cx="60" cy="60" r="60" fill="#dee2e6"/><g transform="translate(60,0) scale(0.8,1)"><text x="0" y="91.5" text-anchor="middle" font-family="Liberation Sans" font-size="94.5" fill="#8a8a8a" stroke="#dee2e6" stroke-width="3.2">R</text></g></svg>
<div class="t" style="left:2699.0px;top:2384.2px;font-size:40.5px;color:#52616b;font-weight:400;letter-spacing:0.7px;">Robert J</div>
<div class="t" style="left:2699.0px;top:2440.2px;font-size:40.7px;color:#6c7a84;font-weight:400;letter-spacing:0.3px;">Alpha Team</div>
<div class="t" style="left:3245.0px;top:2035.3px;font-size:41px;color:#52616b;font-weight:400;letter-spacing:0.4px;">Service</div>
<div class="a" style="left:3996px;top:2030.5px;width:117px;height:56px;background:#f39c12;border-radius:7px"></div>
<div class="t" style="left:3996px;top:2030.5px;width:117px;height:56px;line-height:57px;text-align:center;font-size:33px;color:#fff;font-weight:700">HIGH</div>
<div class="a" style="left:3601px;top:2576.5px;width:214px;height:56px;background:#3590d5;border-radius:7px"></div>
<div class="a" style="left:3997px;top:2576.5px;width:109px;height:56px;background:#0cb87a;border-radius:7px"></div>
<div class="a" style="left:311px;top:1266px;width:3874px;height:251px;box-sizing:border-box;border:3px solid #e3262c;border-radius:5px"></div>
</body></html>
